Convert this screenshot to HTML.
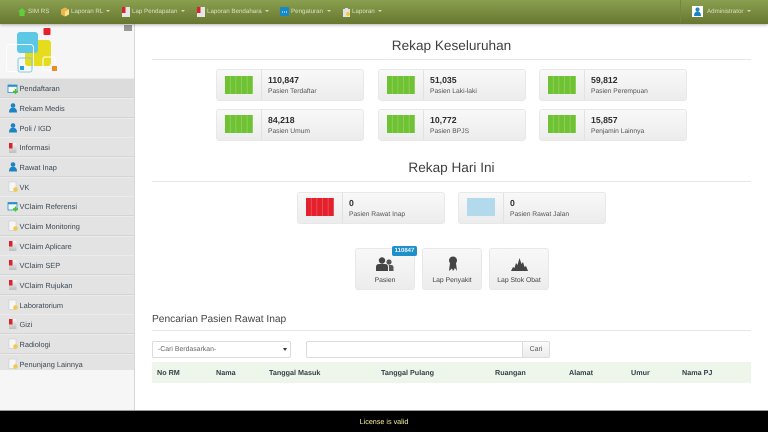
<!DOCTYPE html>
<html><head><meta charset="utf-8"><style>
html,body{margin:0;padding:0;width:768px;height:432px;overflow:hidden;background:#fff;font-family:"Liberation Sans",sans-serif;color:#333}
div,span{position:absolute;box-sizing:border-box;white-space:nowrap}
svg{position:absolute;overflow:visible}
#w{left:0;top:0;width:768px;height:432px;overflow:hidden;filter:blur(.3px);text-rendering:geometricPrecision}
#nav{left:0;top:0;width:768px;height:24px;background:linear-gradient(#8a9f4f,#66772f);box-shadow:0 1px 3px rgba(0,0,0,.3);z-index:3}
.n{top:7px;font-size:6.2px;line-height:9px;color:#d8e0bd}
.c{width:0;height:0;border-left:2px solid transparent;border-right:2px solid transparent;border-top:2px solid #d3dcb6;top:10px}
#side{left:0;top:24px;width:135px;height:387px;background:#f6f6f6;border-right:1px solid #d8d8d8}
.m{left:0;width:134px;height:20px;background:#e3e3e3;border-bottom:1px solid #d4d4d4;border-top:1px solid #ebebeb;font-size:7.4px;line-height:19px;padding-left:19.5px;color:#3c4854}
.card{width:148px;height:32px;background:linear-gradient(#f8f8f8,#ececec);border:1px solid #e8e8e8;border-radius:3px}
.card i{position:absolute;left:44px;top:0;bottom:0;width:1px;background:#e2e2e2}
.bar{position:absolute}
.num{left:51px;top:5px;font-size:8.7px;font-weight:bold;line-height:11px;color:#2e2e2e}
.lab{left:51px;top:16.5px;font-size:6.7px;line-height:9px;color:#555}
.h{left:152px;width:599px;text-align:center;font-size:13.6px;line-height:18px;color:#3f3f3f}
.l{left:152px;width:599px;height:1px;background:#e6e6e6}
.btn{width:60px;height:42px;top:248px;background:linear-gradient(#f8f8f8,#ececec);border:1px solid #e8e8e8;border-radius:3px;font-size:6.8px;color:#444}
.btn span{left:0;width:100%;text-align:center;top:26.500px;line-height:9px}
.th{top:367.500px;font-size:7.200px;font-weight:bold;line-height:9px;color:#36404a}
</style></head><body>
<div id="w">
<div id="nav">
<svg style="left:17px;top:7px" width="10" height="10" viewBox="0 0 10 10"><path d="M5 1L9 5H7.500V9H2.500V5H1Z" fill="#5fd03a"/></svg>
<span class="n" style="left:28px">SIM RS</span>
<svg style="left:60px;top:7px" width="10" height="10" viewBox="0 0 10 10"><path d="M5 0.500L9 2.500V7.500L5 9.500L1 7.500V2.500Z" fill="#eab64c"/><path d="M5 4.500L9 2.500V7.500L5 9.500Z" fill="#fbe08a"/></svg>
<span class="n" style="left:71px">Laporan RL</span><span class="c" style="left:106px"></span>
<svg style="left:122px;top:7px" width="8" height="10" viewBox="0 0 8 10"><rect width="8" height="10" fill="#e6e6e6"/><rect x="0" width="3.500" height="6" fill="#d8242c"/></svg>
<span class="n" style="left:132px">Lap Pendapatan</span><span class="c" style="left:181px"></span>
<svg style="left:197px;top:7px" width="8" height="10" viewBox="0 0 8 10"><rect width="8" height="10" fill="#e6e6e6"/><rect x="0" width="3.500" height="6" fill="#d8242c"/></svg>
<span class="n" style="left:207px">Laporan Bendahara</span><span class="c" style="left:265px"></span>
<svg style="left:280px;top:7px" width="9" height="9" viewBox="0 0 9 9"><rect width="9" height="9" rx="1" fill="#1689c8"/><path d="M2 5h1M4 5h1M6 5h1" stroke="#fff"/></svg>
<span class="n" style="left:291px">Pengaturan</span><span class="c" style="left:327px"></span>
<svg style="left:342px;top:7px" width="9" height="10" viewBox="0 0 9 10"><path d="M1 2H3V1H6V2H8V10H1Z" fill="#e2e2e2"/><circle cx="6" cy="7" r="2" fill="#f1c84a"/></svg>
<span class="n" style="left:352px">Laporan</span><span class="c" style="left:378px"></span>
<div style="left:680px;top:0;width:1px;height:23px;background:#75873a"></div>
<svg style="left:692px;top:6px" width="11" height="11" viewBox="0 0 11 11"><rect width="11" height="11" fill="#fff"/><circle cx="5.500" cy="3.500" r="2" fill="#1a84c4"/><path d="M2 10Q2 5.500 5.500 5.500T9 10Z" fill="#1a84c4"/></svg>
<span class="n" style="left:707px">Administrator</span><span class="c" style="left:747px"></span>
</div>
<div id="side">
<div style="left:124px;top:1px;width:8px;height:6px;background:#999"></div>
<svg style="left:0;top:0" width="134" height="54" viewBox="0 0 134 54">
<rect x="25" y="16" width="26" height="26" rx="3" fill="#e4dc1c"/>
<rect x="17" y="8" width="21" height="21" rx="3" fill="#5cc8e6"/>
<rect x="43.500" y="4" width="7" height="7" rx="1" fill="#e8202a"/>
<rect x="6.500" y="20.500" width="27" height="27" rx="3" fill="none" stroke="#fff" stroke-opacity=".85" stroke-width="1"/>
<rect x="18" y="34" width="14" height="14" rx="2" fill="none" stroke="#7ccbe8"/>
<rect x="20" y="42" width="4" height="4" fill="#2a9fd8"/>
<rect x="43" y="33" width="12" height="13" rx="2" fill="none" stroke="#fff"/>
<rect x="52" y="42" width="5" height="5" fill="#f08a24"/>
</svg>
</div>
<div class="m" style="top:78px;background:#dcdcdc">Pendaftaran</div>
<div class="m" style="top:98px">Rekam Medis</div>
<div class="m" style="top:118px">Poli / IGD</div>
<div class="m" style="top:137px">Informasi</div>
<div class="m" style="top:157px">Rawat Inap</div>
<div class="m" style="top:177px">VK</div>
<div class="m" style="top:196px">VClaim Referensi</div>
<div class="m" style="top:216px">VClaim Monitoring</div>
<div class="m" style="top:236px">VClaim Aplicare</div>
<div class="m" style="top:255px">VClaim SEP</div>
<div class="m" style="top:275px">VClaim Rujukan</div>
<div class="m" style="top:295px">Laboratorium</div>
<div class="m" style="top:314px">Gizi</div>
<div class="m" style="top:334px">Radiologi</div>
<div class="m" style="top:354px;height:16px;border-bottom:0;overflow:hidden">Penunjang Lainnya</div>
<svg style="left:0;top:0;z-index:2" width="134" height="380" viewBox="0 0 134 380">
<defs>
<linearGradient id="dg" x1="0" y1="0" x2="0" y2="1"><stop offset="0" stop-color="#f6f6f6"/><stop offset="1" stop-color="#bdbdbd"/></linearGradient>
<g id="doc"><rect x="0" y="0" width="7.500" height="10" fill="url(#dg)"/><rect x="0" y="0" width="3.500" height="5.500" fill="#d8242c"/></g>
<g id="note"><rect x="0" y="0" width="7" height="9.500" fill="#f6f6f6" stroke="#c4c4c4" stroke-width=".5"/><circle cx="6.500" cy="7.500" r="2.300" fill="#f2c94a"/></g>
<g id="user"><circle cx="4.500" cy="2.500" r="2.300" fill="#1a84c4"/><path d="M0.500 9.500Q0.500 4.800 4.500 4.800T8.500 9.500Z" fill="#1a84c4"/></g>
<g id="win"><rect x="0" y="0" width="9" height="7.500" fill="#f4fafd" stroke="#2a8fc4" stroke-width=".8"/><rect x="0" y="0" width="9" height="1.800" fill="#2a8fc4"/><path d="M7.500 4V9M5 6.500H10" stroke="#45c61e" stroke-width="1.400"/></g>
</defs>
<use href="#win" x="8" y="85"/><use href="#user" x="8.500" y="103"/><use href="#user" x="8.500" y="123"/>
<use href="#doc" x="9" y="143"/><use href="#user" x="8.500" y="162"/><use href="#note" x="9" y="182"/>
<use href="#win" x="8" y="202.500"/><use href="#note" x="9" y="221"/><use href="#doc" x="9" y="241"/>
<use href="#doc" x="9" y="260"/><use href="#doc" x="9" y="280"/><use href="#note" x="9" y="300"/>
<use href="#doc" x="9" y="319"/><use href="#note" x="9" y="339"/><use href="#note" x="9" y="359"/>
</svg>

<div class="h" style="top:37px">Rekap Keseluruhan</div><div class="l" style="top:59px"></div>
<svg width="0" height="0"><defs>
<pattern id="g" width="5.600" height="18" patternUnits="userSpaceOnUse"><rect width="5.600" height="18" fill="#6fc232"/><rect x="5" width=".6" height="18" fill="#a0d67a"/></pattern>
<pattern id="r" width="5.600" height="18" patternUnits="userSpaceOnUse"><rect width="5.600" height="18" fill="#e3202c"/><rect x="5" width=".6" height="18" fill="#ee6a72"/></pattern>
</defs></svg>
<div class="card" style="left:216px;top:69px"><i></i><svg class="bar" viewBox="0 0 28 18" style="left:8px;top:6px" width="28" height="18"><rect width="28" height="18" fill="url(#g)"/></svg><span class="num">110,847</span><span class="lab">Pasien Terdaftar</span></div>
<div class="card" style="left:378px;top:69px"><i></i><svg class="bar" viewBox="0 0 28 18" style="left:8px;top:6px" width="28" height="18"><rect width="28" height="18" fill="url(#g)"/></svg><span class="num">51,035</span><span class="lab">Pasien Laki-laki</span></div>
<div class="card" style="left:539px;top:69px"><i></i><svg class="bar" viewBox="0 0 28 18" style="left:8px;top:6px" width="28" height="18"><rect width="28" height="18" fill="url(#g)"/></svg><span class="num">59,812</span><span class="lab">Pasien Perempuan</span></div>
<div class="card" style="left:216px;top:109px"><i></i><svg class="bar" viewBox="0 0 28 18" style="left:8px;top:5px" width="28" height="18"><rect width="28" height="18" fill="url(#g)"/></svg><span class="num">84,218</span><span class="lab">Pasien Umum</span></div>
<div class="card" style="left:378px;top:109px"><i></i><svg class="bar" viewBox="0 0 28 18" style="left:8px;top:5px" width="28" height="18"><rect width="28" height="18" fill="url(#g)"/></svg><span class="num">10,772</span><span class="lab">Pasien BPJS</span></div>
<div class="card" style="left:539px;top:109px"><i></i><svg class="bar" viewBox="0 0 28 18" style="left:8px;top:5px" width="28" height="18"><rect width="28" height="18" fill="url(#g)"/></svg><span class="num">15,857</span><span class="lab">Penjamin Lainnya</span></div>

<div class="h" style="top:159px">Rekap Hari Ini</div><div class="l" style="top:181px"></div>
<div class="card" style="left:297px;top:192px"><i></i><svg class="bar" viewBox="0 0 28 18" style="left:8px;top:5px" width="28" height="18"><rect width="28" height="18" fill="url(#r)"/></svg><span class="num">0</span><span class="lab">Pasien Rawat Inap</span></div>
<div class="card" style="left:458px;top:192px"><i></i><div style="left:8px;top:5px;width:28px;height:18px;background:#b2d9ec"></div><span class="num">0</span><span class="lab">Pasien Rawat Jalan</span></div>

<div class="btn" style="left:355px;width:60px"><svg style="left:20px;top:8px" width="18" height="14" viewBox="0 0 18 14"><circle cx="6" cy="3.500" r="3.200" fill="#444"/><path d="M0 14V10Q0 7 3 7H9Q12 7 12 10V14Z" fill="#444"/><circle cx="13" cy="5" r="2.600" fill="#555"/><path d="M12.800 8H15Q17.500 8 17.500 10.500V14H13V10Z" fill="#555"/></svg><span>Pasien</span></div>
<div style="left:392px;top:246px;width:25px;height:10px;background:#1e8fc8;border-radius:2px;color:#e6f3fa;font-size:6px;font-weight:bold;line-height:10px;text-align:center;z-index:2">110847</div>
<div class="btn" style="left:422px"><svg style="left:24px;top:7px" width="12" height="16" viewBox="0 0 12 16"><circle cx="6" cy="4.500" r="4" fill="#444"/><path d="M3 7L2 15L5 12.500L6 15L8 12L10 15L9 7Z" fill="#444"/></svg><span>Lap Penyakit</span></div>
<div class="btn" style="left:489px"><svg style="left:21px;top:9px" width="17" height="13" viewBox="0 0 17 13"><path d="M0 13L2 9L3.500 10L5 5L6.500 7L8.500 0L10.500 6L12 4L13.500 9L15 8L17 13Z" fill="#444"/></svg><span>Lap Stok Obat</span></div>

<div style="left:152px;top:312px;font-size:10.200px;line-height:15px;color:#444">Pencarian Pasien Rawat Inap</div><div class="l" style="top:330px"></div>
<div style="left:152px;top:341px;width:139px;height:17px;border:1px solid #dcdcdc;border-radius:2px;background:#fff;font-size:6.900px;line-height:15px;padding-left:5px;color:#666">-Cari Berdasarkan-</div>
<div style="left:283px;top:348px;width:0;height:0;border-left:2px solid transparent;border-right:2px solid transparent;border-top:3px solid #333"></div>
<div style="left:306px;top:341px;width:217px;height:17px;border:1px solid #dcdcdc;border-radius:2px 0 0 2px;background:#fff"></div>
<div style="left:522px;top:341px;width:28px;height:17px;border:1px solid #dcdcdc;border-radius:0 2px 2px 0;background:linear-gradient(#fafafa,#ececec);font-size:7px;line-height:15px;text-align:center;color:#555">Cari</div>
<div style="left:152px;top:362px;width:599px;height:21px;background:#eef5ea"></div>
<span class="th" style="left:157px">No RM</span><span class="th" style="left:216px">Nama</span><span class="th" style="left:269px">Tanggal Masuk</span><span class="th" style="left:381px">Tanggal Pulang</span><span class="th" style="left:495px">Ruangan</span><span class="th" style="left:569px">Alamat</span><span class="th" style="left:631px">Umur</span><span class="th" style="left:682px">Nama PJ</span>
<div style="left:0;top:410px;width:768px;height:22px;background:#000;border-top:1px solid #999;text-align:center;color:#f7f0a0;font-size:7.200px;line-height:21px">License is valid</div>
</div>
</body></html>
